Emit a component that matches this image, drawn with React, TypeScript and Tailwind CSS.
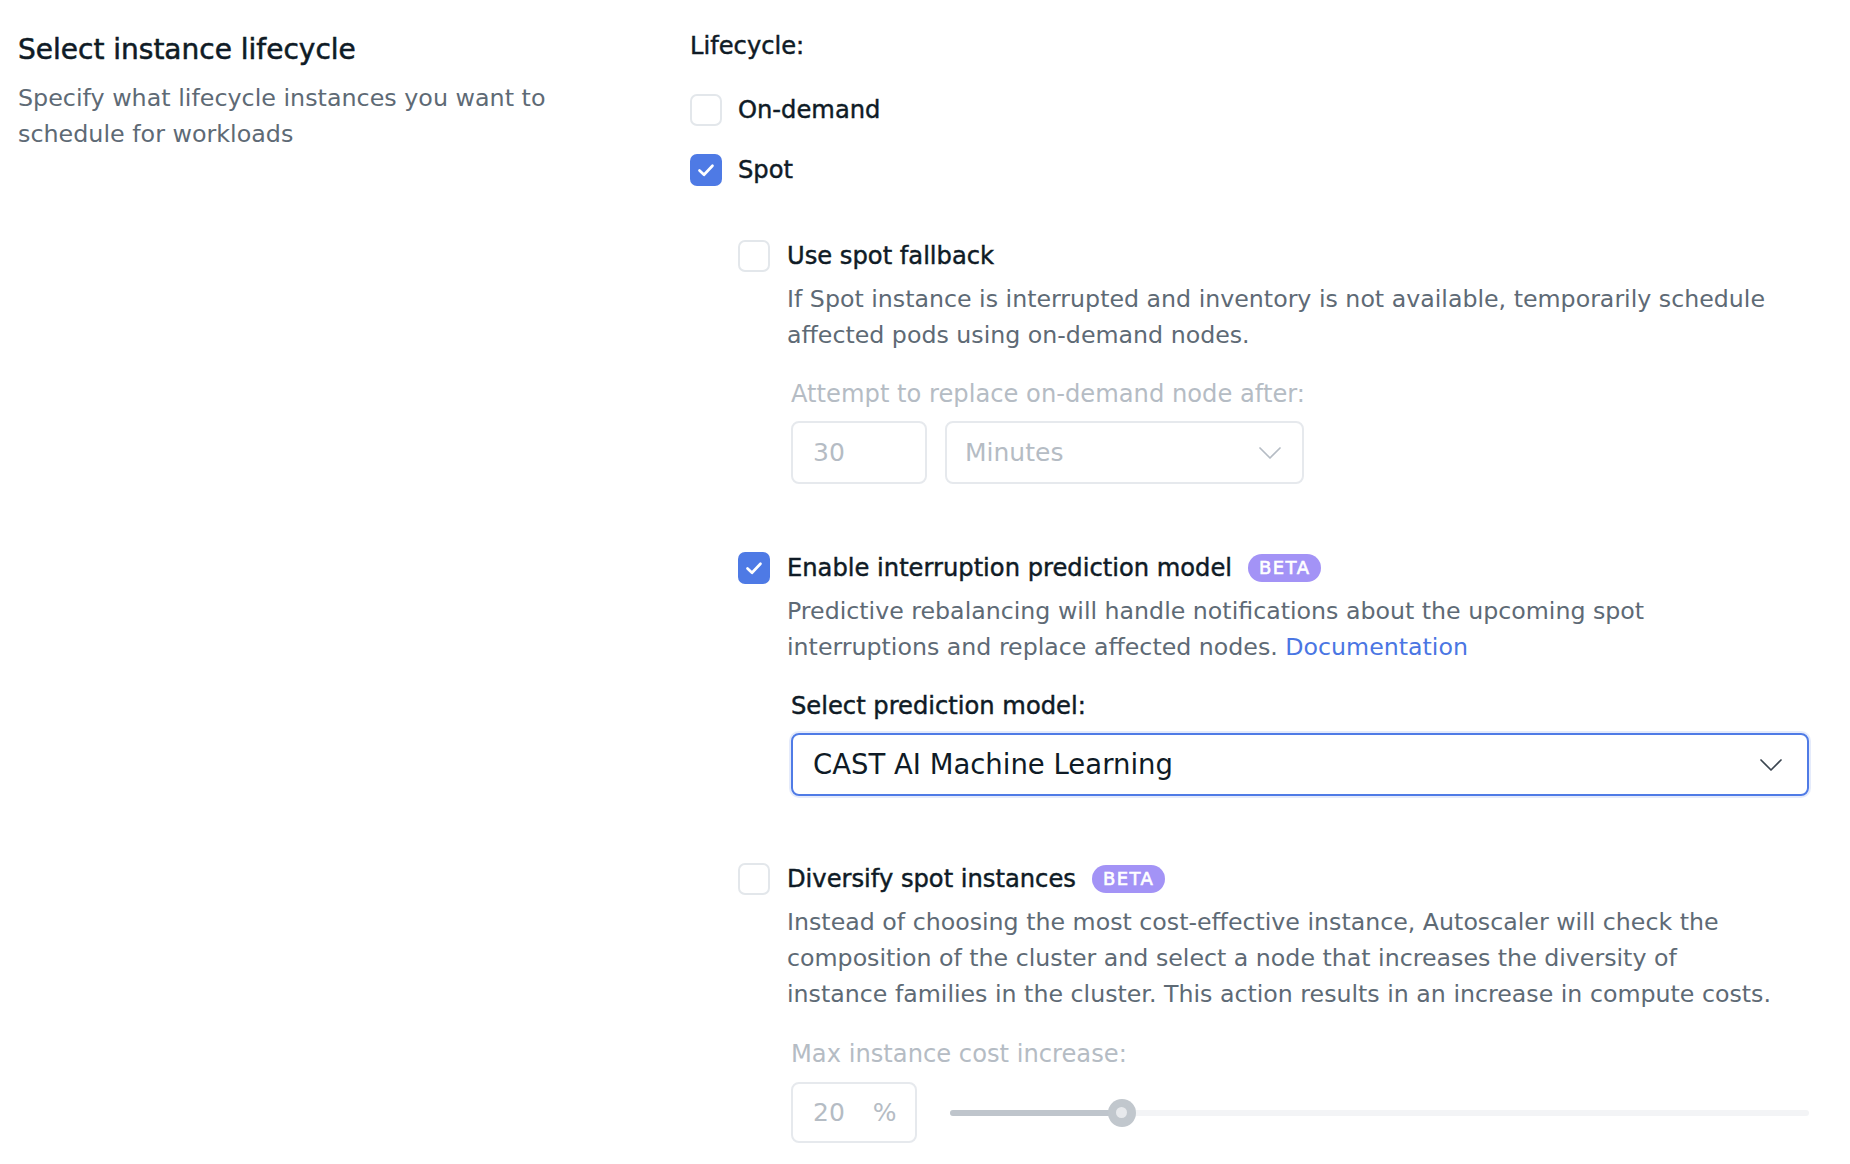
import React from 'react';

function cn(...c: (string | false | undefined)[]) {
  return c.filter(Boolean).join(' ');
}

// DejaVu has no 500 weight, so medium labels get a hair of stroke instead
const MEDIUM = '[-webkit-text-stroke:0.45px_currentColor]';

const CheckMark = () => (
  <svg width="18" height="14" viewBox="0 0 18 14" fill="none" stroke="white" strokeWidth="2.7" strokeLinecap="round" strokeLinejoin="round">
    <path d="M2.5 7.5l4.5 4.2L15.5 2.8" />
  </svg>
);

const Checkbox = ({ checked }: { checked?: boolean }) => (
  <div
    className={cn(
      'flex h-8 w-8 shrink-0 items-center justify-center rounded-[7px]',
      checked ? 'bg-[#4e7ae5]' : 'border-2 border-[#e3e7eb] bg-white'
    )}
  >
    {checked && <CheckMark />}
  </div>
);

const Beta = () => (
  <span className="ml-4 inline-flex h-[28px] items-center rounded-full bg-[#a393f6] px-[11px] text-[18px] leading-none tracking-[0.08em] text-white [-webkit-text-stroke:0.6px_currentColor]">
    BETA
  </span>
);

const Chevron = ({ className }: { className?: string }) => (
  <svg width="24" height="14" viewBox="0 0 24 14" fill="none" stroke="currentColor" strokeWidth="1.7" strokeLinecap="round" strokeLinejoin="round" className={className}>
    <path d="M2 2l10 10L22 2" />
  </svg>
);

const Row = ({ label, checked, className }: { label: string; checked?: boolean; className?: string }) => (
  <div className={cn('flex h-8 items-center gap-4', className)}>
    <Checkbox checked={checked} />
    <span className={cn('text-[24.2px] leading-9', MEDIUM)}>{label}</span>
  </div>
);

interface ItemProps {
  checked?: boolean;
  label: string;
  beta?: boolean;
  className?: string;
  children?: React.ReactNode;
}

const Item = ({ checked, label, beta, className, children }: ItemProps) => (
  <div className={cn('flex items-start gap-[17px]', className)}>
    <div className="pt-[2px]">
      <Checkbox checked={checked} />
    </div>
    <div className="flex min-w-0 flex-1 flex-col">
      <div className="flex h-9 items-center">
        <span className={cn('text-[24.2px] leading-9', MEDIUM)}>{label}</span>
        {beta && <Beta />}
      </div>
      {children}
    </div>
  </div>
);

const Desc = ({ children }: { children: React.ReactNode }) => (
  <p className="mt-[7px] text-[23.7px] leading-9 text-[#5e6a75]">{children}</p>
);

export default function App() {
  return (
    <div className="flex min-h-screen bg-white text-[#0f1b26] [font-family:'DejaVu_Sans',sans-serif]">
      <div className="w-[690px] shrink-0 pl-[18px] pt-[32px]">
        <h2 className="text-[28px] leading-9 [-webkit-text-stroke:0.55px_currentColor]">Select instance lifecycle</h2>
        <p className="mt-3 max-w-[600px] text-[23.8px] leading-9 text-[#5e6a75]">
          Specify what lifecycle instances you want to
          <br />
          schedule for workloads
        </p>
      </div>

      <div className="flex w-[1119px] flex-col pt-[28px]">
        <div className={cn('text-[24.2px] leading-9', MEDIUM)}>Lifecycle:</div>
        <Row className="mt-[30px]" label="On-demand" />
        <Row className="mt-[28px]" label="Spot" checked />

        <div className="mt-[52px] flex flex-col pl-12">
          <Item label="Use spot fallback">
            <Desc>
              If Spot instance is interrupted and inventory is not available, temporarily schedule
              <br />
              affected pods using on-demand nodes.
            </Desc>
            <div className="ml-1 mt-[23px] text-[24.2px] leading-9 text-[#b5bcc4]">Attempt to replace on-demand node after:</div>
            <div className="ml-1 mt-[9px] flex gap-[18px]">
              <div className="flex h-[63px] w-[136px] items-center rounded-lg border-2 border-[#e6e9ed] pl-[20px] text-[25px] text-[#b5bcc4]">
                30
              </div>
              <div className="flex h-[63px] w-[359px] items-center justify-between rounded-lg border-2 border-[#e6e9ed] pl-[18px] pr-[20px] text-[25px] text-[#b5bcc4]">
                <span>Minutes</span>
                <Chevron className="text-[#b5bcc4]" />
              </div>
            </div>
          </Item>

          <Item className="mt-[66px]" label="Enable interruption prediction model" beta checked>
            <Desc>
              Predictive rebalancing will handle notifications about the upcoming spot
              <br />
              interruptions and replace affected nodes.{' '}
              <a className="text-[#4a76e3]">Documentation</a>
            </Desc>
            <div className={cn('ml-1 mt-[23px] text-[24.2px] leading-9', MEDIUM)}>Select prediction model:</div>
            <div className="ml-1 mt-[9px] flex h-[63px] w-[1018px] items-center justify-between rounded-lg border-2 border-[#4f7be6] pl-[20px] pr-[24px] shadow-[0_0_0_2px_rgba(79,123,230,0.15)]">
              <span className="text-[27.5px]">CAST AI Machine Learning</span>
              <Chevron className="text-[#3b4550]" />
            </div>
          </Item>

          <Item className="mt-[65px]" label="Diversify spot instances" beta>
            <Desc>
              Instead of choosing the most cost-effective instance, Autoscaler will check the
              <br />
              composition of the cluster and select a node that increases the diversity of
              <br />
              instance families in the cluster. This action results in an increase in compute costs.
            </Desc>
            <div className="ml-1 mt-6 text-[24.2px] leading-9 text-[#b5bcc4]">Max instance cost increase:</div>
            <div className="ml-1 mt-[10px] flex w-[1018px] items-center">
              <div className="flex h-[61px] w-[126px] shrink-0 items-center gap-[28px] rounded-lg border-2 border-[#e6e9ed] pl-[20px] text-[25px] text-[#b5bcc4]">
                <span>20</span>
                <span>%</span>
              </div>
              <div className="relative ml-[33px] h-[6px] flex-1 rounded-full bg-[#f3f4f6]">
                <div className="h-full w-[20%] rounded-full bg-[#bfc5cc]" />
                <div className="absolute left-[20%] top-1/2 flex h-7 w-7 -translate-x-1/2 -translate-y-1/2 items-center justify-center rounded-full bg-[#c1c7cd]">
                  <div className="h-[11px] w-[11px] rounded-full bg-[#e7e9ec]" />
                </div>
              </div>
            </div>
          </Item>
        </div>
      </div>
    </div>
  );
}
